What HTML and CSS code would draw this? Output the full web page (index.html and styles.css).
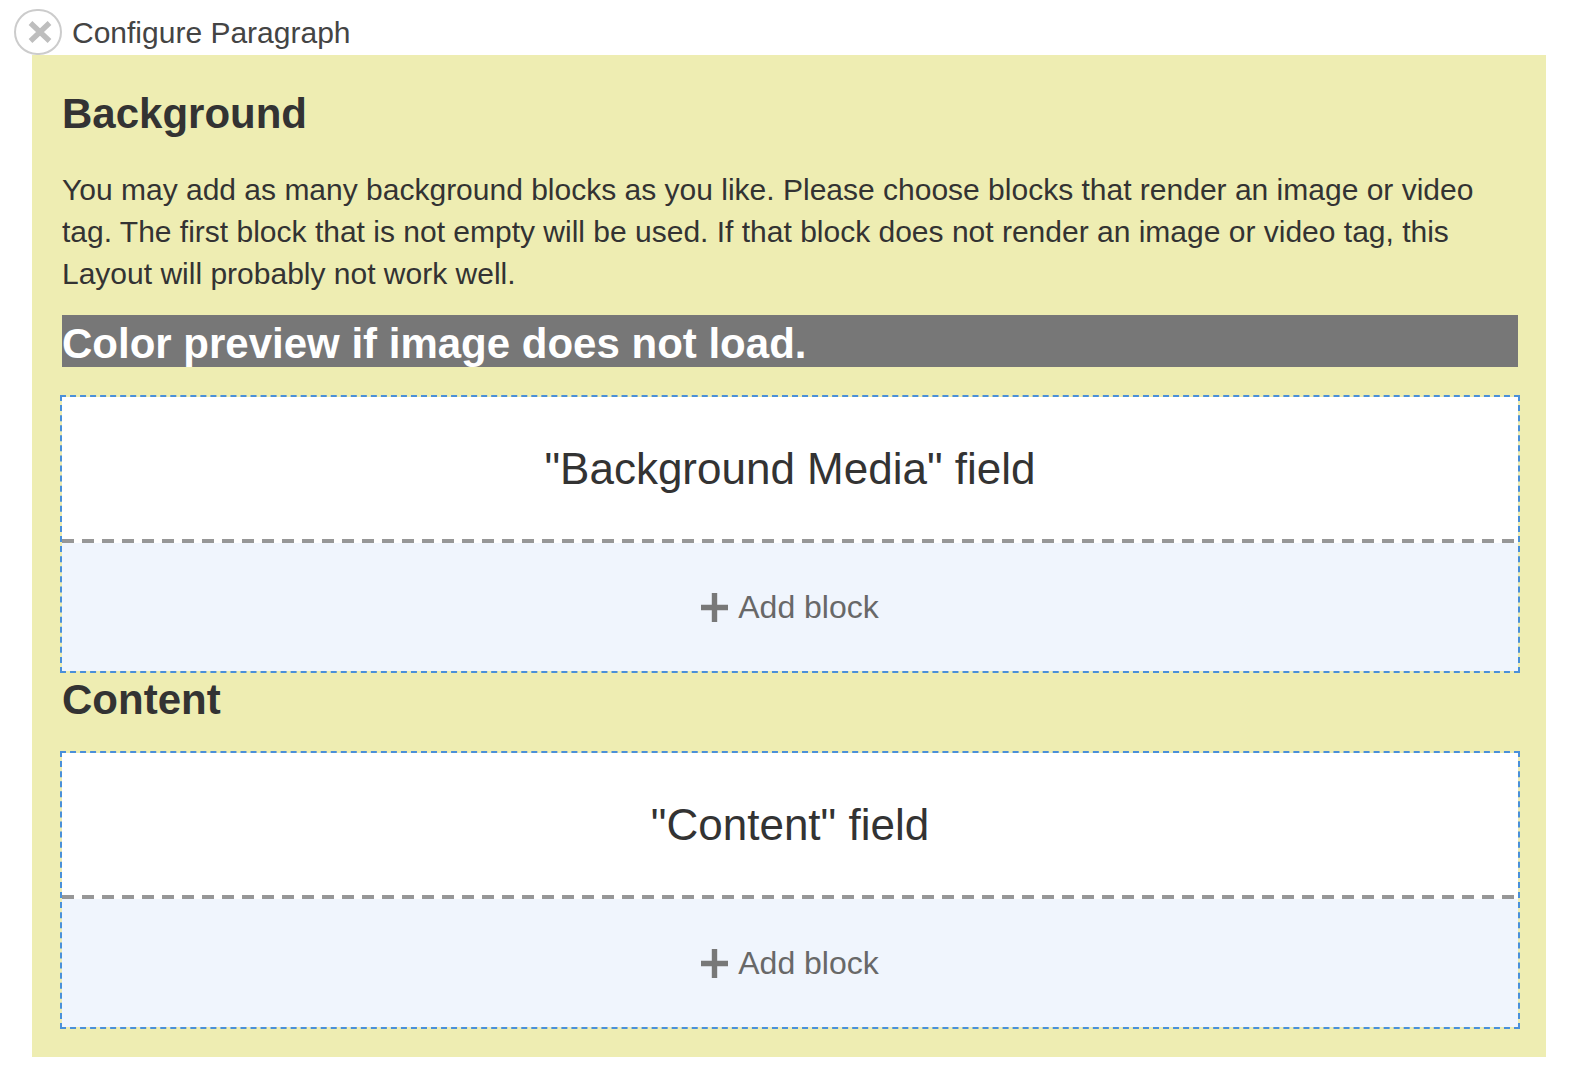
FILE: index.html
```html
<!DOCTYPE html>
<html lang="en">
<head>
    <meta charset="UTF-8">
    <meta name="viewport" content="width=device-width, initial-scale=1.0">
    <title>Configure Paragraph</title>
    <link rel="stylesheet" href="styles.css">
</head>
<body>
    <div class="section-header">
        <button type="button" class="remove-btn" aria-label="Remove section">
            <svg width="24" height="24" viewBox="0 0 24 24" aria-hidden="true">
                <path d="M2.5 3 L21.5 21 M21.5 3 L2.5 21" stroke="#bebebe" stroke-width="5.4" fill="none"/>
            </svg>
        </button>
        <a href="#" class="configure-link">Configure Paragraph</a>
    </div>

    <main class="layout-section">
        <h2>Background</h2>
        <p class="help-text">You may add as many background blocks as you like. Please choose blocks that render an image or video tag. The first block that is not empty will be used. If that block does not render an image or video tag, this Layout will probably not work well.</p>
        <h2 class="color-preview">Color preview if image does not load.</h2>

        <div class="region">
            <div class="block">"Background Media" field</div>
            <div class="add-block">
                <a href="#" class="add-link">
                    <svg width="27" height="29" viewBox="0 0 27 29" aria-hidden="true">
                        <path d="M0 14.5 H27 M13.5 0 V29" stroke="#787878" stroke-width="5.4" fill="none"/>
                    </svg>
                    Add block
                </a>
            </div>
        </div>

        <h2 class="content-title">Content</h2>

        <div class="region">
            <div class="block">"Content" field</div>
            <div class="add-block">
                <a href="#" class="add-link">
                    <svg width="27" height="29" viewBox="0 0 27 29" aria-hidden="true">
                        <path d="M0 14.5 H27 M13.5 0 V29" stroke="#787878" stroke-width="5.4" fill="none"/>
                    </svg>
                    Add block
                </a>
            </div>
        </div>
    </main>
</body>
</html>
```

FILE: styles.css
```css
body {
    margin: 0;
    padding: 9px 26px 22px 32px;
    background-color: #fff;
    color: #333;
    font-family: "Helvetica Neue", Helvetica, "Liberation Sans", Arial, sans-serif;
    font-size: 30px;
    line-height: 42px;
}
a {
    color: inherit;
    text-decoration: none;
}
h2 {
    margin: 0;
    padding-top: 6px;
    font-size: 42px;
    line-height: 46px;
}
.section-header {
    display: flex;
    align-items: center;
    gap: 10px;
    margin-left: -18px;
}
.remove-btn {
    display: flex;
    align-items: center;
    justify-content: center;
    box-sizing: border-box;
    width: 48px;
    height: 46px;
    padding: 0 0 0 3px;
    border: 2px solid #ccc;
    border-radius: 24px;
    background-color: #fff;
    cursor: pointer;
}
.configure-link {
    padding-top: 2px;
    color: #444;
}
.layout-section {
    padding: 30px 28px 30px 30px;
    background-color: #eeedb2;
}
.help-text {
    margin: 32px 0 20px;
}
.color-preview {
    margin-bottom: 30px;
    background-color: #777;
    color: #fff;
}
.region {
    background-color: #fff;
    outline: 2px dashed #4a90d9;
}
.block {
    padding: 46px 0 44px;
    font-size: 44px;
    line-height: 52px;
    text-align: center;
}
/* long grey dashes between the block and the add link */
.region .add-block::before {
    content: "";
    display: block;
    height: 4px;
    background: repeating-linear-gradient(to right, #979797 0 12px, #fff 12px 20px);
}
.add-block {
    background-color: #f0f5fd;
}
.add-link {
    display: flex;
    align-items: center;
    justify-content: center;
    gap: 10px;
    padding: 43px 0;
    color: #686868;
    font-size: 32px;
}
.content-title {
    padding-bottom: 30px;
}
```
